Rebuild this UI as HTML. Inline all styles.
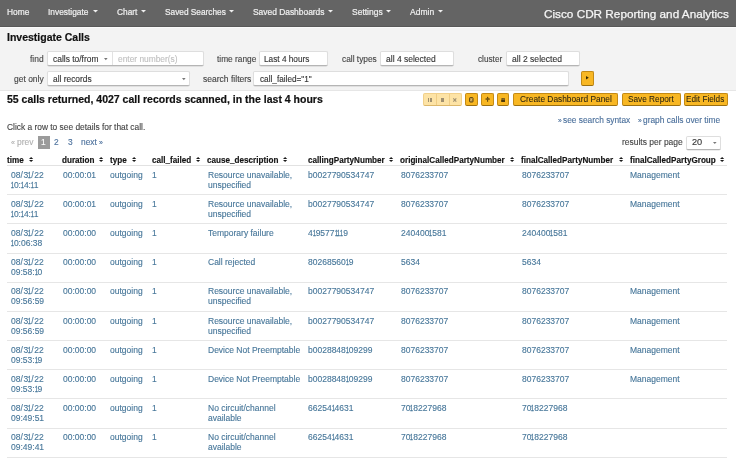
<!DOCTYPE html>
<html><head><meta charset="utf-8">
<style>
html,body{margin:0;padding:0;width:736px;height:463px;overflow:hidden;background:#fff;}
body{position:relative;font-family:"Liberation Sans",sans-serif;}
.t{position:absolute;white-space:nowrap;will-change:transform;-webkit-text-stroke:0.12px currentColor;}
.b{position:absolute;box-sizing:border-box;}
svg{position:absolute;overflow:visible;}
</style></head><body>
<div class="b" style="left:0px;top:0px;width:736.00px;height:26.50px;background:#646464;border-bottom:1px solid #585858;"></div>
<div class="b" style="left:0px;top:26.5px;width:736.00px;height:1.00px;background:#fafafa;"></div>
<div class="t" style="left:6.8px;top:7px;font-size:8.4px;line-height:10px;color:#f0f0f0;-webkit-text-stroke:0.2px #f0f0f0;">Home</div>
<div class="t" style="left:48.1px;top:7px;font-size:8.4px;line-height:10px;color:#f0f0f0;-webkit-text-stroke:0.2px #f0f0f0;">Investigate</div>
<svg style="left:92.89999999999999px;top:10.4px" width="6" height="3.4"><path d="M0 0 L5 0 L2.5 2.4 Z" fill="#f0f0f0"/></svg>
<div class="t" style="left:116.8px;top:7px;font-size:8.34px;line-height:10px;color:#f0f0f0;-webkit-text-stroke:0.2px #f0f0f0;">Chart</div>
<svg style="left:141.4px;top:10.4px" width="6" height="3.4"><path d="M0 0 L5 0 L2.5 2.4 Z" fill="#f0f0f0"/></svg>
<div class="t" style="left:164.6px;top:7px;font-size:8.3px;line-height:10px;color:#f0f0f0;-webkit-text-stroke:0.2px #f0f0f0;">Saved Searches</div>
<svg style="left:229.3px;top:10.4px" width="6" height="3.4"><path d="M0 0 L5 0 L2.5 2.4 Z" fill="#f0f0f0"/></svg>
<div class="t" style="left:253.1px;top:7px;font-size:8.42px;line-height:10px;color:#f0f0f0;-webkit-text-stroke:0.2px #f0f0f0;">Saved Dashboards</div>
<svg style="left:328.3px;top:10.4px" width="6" height="3.4"><path d="M0 0 L5 0 L2.5 2.4 Z" fill="#f0f0f0"/></svg>
<div class="t" style="left:351.9px;top:7px;font-size:8.5px;line-height:10px;color:#f0f0f0;-webkit-text-stroke:0.2px #f0f0f0;">Settings</div>
<svg style="left:386.3px;top:10.4px" width="6" height="3.4"><path d="M0 0 L5 0 L2.5 2.4 Z" fill="#f0f0f0"/></svg>
<div class="t" style="left:410.2px;top:7px;font-size:8.54px;line-height:10px;color:#f0f0f0;-webkit-text-stroke:0.2px #f0f0f0;">Admin</div>
<svg style="left:438.1px;top:10.4px" width="6" height="3.4"><path d="M0 0 L5 0 L2.5 2.4 Z" fill="#f0f0f0"/></svg>
<div class="t" style="left:543.6px;top:7px;font-size:11.75px;line-height:13px;color:#f6f6f6;-webkit-text-stroke:0.25px #f6f6f6;">Cisco CDR Reporting and Analytics</div>
<div class="b" style="left:0px;top:27.5px;width:736.00px;height:63.30px;background:#f3f3f3;border-bottom:1px solid #e6e6e6;"></div>
<div class="t" style="left:7px;top:31px;font-size:10.5px;line-height:12px;color:#111;font-weight:bold;-webkit-text-stroke:0.2px #111;">Investigate Calls</div>
<div class="t" style="right:692.70px;top:54px;font-size:8.44px;line-height:10px;color:#444;">find</div>
<div class="b" style="left:46.8px;top:51.3px;width:157.00px;height:14.70px;background:#fff;border:1px solid #dedede;border-bottom-color:#b5b5b5;border-radius:2px;box-shadow:0 0.5px 0.6px rgba(0,0,0,0.15);"></div>
<div class="b" style="left:112px;top:52px;width:0.80px;height:13.00px;background:#e2e2e2;"></div>
<div class="t" style="left:53px;top:54px;font-size:8.44px;line-height:10px;color:#333;">calls to/from</div>
<svg style="left:104.2px;top:58px" width="4.6" height="3.2"><path d="M0 0 L3.6 0 L1.8 2.2 Z" fill="#777"/></svg>
<div class="t" style="left:117.7px;top:54px;font-size:8.38px;line-height:10px;color:#c0c0c0;">enter number(s)</div>
<div class="t" style="right:480.00px;top:54px;font-size:8.32px;line-height:10px;color:#444;">time range</div>
<div class="b" style="left:259px;top:51.3px;width:68.90px;height:14.70px;background:#fff;border:1px solid #dedede;border-bottom-color:#b5b5b5;border-radius:2px;box-shadow:0 0.5px 0.6px rgba(0,0,0,0.15);"></div>
<div class="t" style="left:264.4px;top:55px;font-size:8.25px;line-height:9px;color:#333;">Last 4 hours</div>
<div class="t" style="right:359.00px;top:54px;font-size:8.35px;line-height:10px;color:#444;">call types</div>
<div class="b" style="left:380.3px;top:51.3px;width:73.50px;height:14.70px;background:#fff;border:1px solid #dedede;border-bottom-color:#b5b5b5;border-radius:2px;box-shadow:0 0.5px 0.6px rgba(0,0,0,0.15);"></div>
<div class="t" style="left:386px;top:54px;font-size:8.53px;line-height:10px;color:#333;">all 4 selected</div>
<div class="t" style="right:234.00px;top:55px;font-size:8.22px;line-height:9px;color:#444;">cluster</div>
<div class="b" style="left:506.2px;top:51.3px;width:73.40px;height:14.70px;background:#fff;border:1px solid #dedede;border-bottom-color:#b5b5b5;border-radius:2px;box-shadow:0 0.5px 0.6px rgba(0,0,0,0.15);"></div>
<div class="t" style="left:511.5px;top:54px;font-size:8.57px;line-height:10px;color:#333;">all 2 selected</div>
<div class="t" style="right:692.70px;top:74px;font-size:8.48px;line-height:10px;color:#444;">get only</div>
<div class="b" style="left:46.8px;top:71.4px;width:143.00px;height:14.60px;background:#fff;border:1px solid #dedede;border-bottom-color:#b5b5b5;border-radius:2px;box-shadow:0 0.5px 0.6px rgba(0,0,0,0.15);"></div>
<div class="t" style="left:53px;top:74px;font-size:8.39px;line-height:10px;color:#333;">all records</div>
<svg style="left:181.9px;top:78px" width="4.6" height="3.2"><path d="M0 0 L3.6 0 L1.8 2.2 Z" fill="#777"/></svg>
<div class="t" style="right:484.70px;top:74px;font-size:8.54px;line-height:10px;color:#444;">search filters</div>
<div class="b" style="left:253.1px;top:71.4px;width:315.50px;height:14.60px;background:#fff;border:1px solid #dedede;border-bottom-color:#b5b5b5;border-radius:2px;box-shadow:0 0.5px 0.6px rgba(0,0,0,0.15);"></div>
<div class="t" style="left:260.2px;top:75px;font-size:8.23px;line-height:9px;color:#333;">call_failed="1"</div>
<div class="b" style="left:580.9px;top:71.4px;width:13.20px;height:14.20px;background:#f8b723;border:1px solid #c48a14;border-bottom-color:#9c7010;border-radius:2px;"></div>
<svg style="left:586px;top:75.8px" width="4" height="4"><path d="M0 0 L2.8 1.8 L0 3.6 Z" fill="#3a2a00"/></svg>
<div class="t" style="left:7.1px;top:93px;font-size:10.5px;line-height:12px;color:#111;font-weight:bold;-webkit-text-stroke:0.2px #111;">55 calls returned, 4027 call records scanned, in the last 4 hours</div>
<div class="b" style="left:423.2px;top:93.4px;width:38.40px;height:12.50px;background:#fde3a5;border:1px solid #f1d08a;border-bottom-color:#dcb76a;border-radius:2px;"></div>
<div class="b" style="left:435.9px;top:93.9px;width:0.70px;height:11.50px;background:#efcd85;"></div>
<div class="b" style="left:448.5px;top:93.9px;width:0.70px;height:11.50px;background:#efcd85;"></div>
<div class="b" style="left:428.1px;top:97.8px;width:1.30px;height:4.20px;background:#a09070;"></div>
<div class="b" style="left:430.4px;top:97.8px;width:1.30px;height:4.20px;background:#a09070;"></div>
<div class="b" style="left:440.9px;top:98.4px;width:3.00px;height:3.30px;background:#a09070;"></div>
<svg style="left:453.2px;top:97.8px" width="4" height="4"><path d="M0.3 0.3 L3.3 3.6 M3.3 0.3 L0.3 3.6" stroke="#a09070" stroke-width="1.1"/></svg>
<div class="b" style="left:465.3px;top:93.4px;width:12.50px;height:12.50px;background:#f8b723;border:1px solid #c48a14;border-bottom-color:#9c7010;border-radius:2px;"></div>
<div class="b" style="left:481.1px;top:93.4px;width:12.50px;height:12.50px;background:#f8b723;border:1px solid #c48a14;border-bottom-color:#9c7010;border-radius:2px;"></div>
<div class="b" style="left:497.1px;top:93.4px;width:12.40px;height:12.50px;background:#f8b723;border:1px solid #c48a14;border-bottom-color:#9c7010;border-radius:2px;"></div>
<svg style="left:469px;top:97px" width="6" height="7"><rect x="0.6" y="0.6" width="3.4" height="4.4" rx="0.6" fill="#c9a04a" stroke="#4a3608" stroke-width="0.9"/><path d="M1.5 3.8 L3.2 1.6" stroke="#e8c070" stroke-width="0.7"/></svg>
<svg style="left:485px;top:96px" width="6" height="7"><path d="M1.5 2.6 L2.65 0.6 L3.8 2.6 Z" fill="#4a3608"/><rect x="0.5" y="2.5" width="4.3" height="1.1" fill="#4a3608"/><rect x="2.2" y="3.5" width="0.9" height="2.3" fill="#4a3608"/></svg>
<svg style="left:501px;top:98px" width="6" height="5"><rect x="0.9" y="0.4" width="2.4" height="1.6" fill="#c9a04a" stroke="#4a3608" stroke-width="0.6"/><rect x="0.2" y="1.8" width="3.8" height="2.1" rx="0.5" fill="#4a3608"/></svg>
<div class="b" style="left:513.2px;top:93.4px;width:104.50px;height:12.50px;background:#f8b723;border:1px solid #c48a14;border-bottom-color:#9c7010;border-radius:2px;"></div>
<div class="t" style="left:519.5px;top:94px;font-size:8.35px;line-height:10px;color:#2a2310;-webkit-text-stroke:0.05px #2a2310;">Create Dashboard Panel</div>
<div class="b" style="left:621.5px;top:93.4px;width:59.10px;height:12.50px;background:#f8b723;border:1px solid #c48a14;border-bottom-color:#9c7010;border-radius:2px;"></div>
<div class="t" style="left:628px;top:95px;font-size:8.25px;line-height:9px;color:#2a2310;-webkit-text-stroke:0.05px #2a2310;">Save Report</div>
<div class="b" style="left:684px;top:93.4px;width:43.50px;height:12.50px;background:#f8b723;border:1px solid #c48a14;border-bottom-color:#9c7010;border-radius:2px;"></div>
<div class="t" style="left:686.4px;top:95px;font-size:8.2px;line-height:9px;color:#2a2310;-webkit-text-stroke:0.05px #2a2310;">Edit Fields</div>
<div class="t" style="left:558.2px;top:117px;font-size:6.8px;line-height:7px;color:#4a6f9b;">»</div>
<div class="t" style="left:563.4px;top:115px;font-size:8.35px;line-height:10px;color:#4a6f9b;">see search syntax</div>
<div class="t" style="left:637.5px;top:117px;font-size:6.8px;line-height:7px;color:#4a6f9b;">»</div>
<div class="t" style="left:643.3px;top:115px;font-size:8.37px;line-height:10px;color:#4a6f9b;">graph calls over time</div>
<div class="t" style="left:7.1px;top:122px;font-size:8.4px;line-height:10px;color:#444;">Click a row to see details for that call.</div>
<div class="t" style="left:11px;top:139px;font-size:7px;line-height:7px;color:#b0b0b0;">«</div>
<div class="t" style="left:17px;top:137px;font-size:8.48px;line-height:10px;color:#b0b0b0;">prev</div>
<div class="b" style="left:37.7px;top:136px;width:11.90px;height:12.70px;background:#9b9b9b;"></div>
<div class="t" style="left:41.3px;top:137px;font-size:8.4px;line-height:10px;color:#fff;">1</div>
<div class="t" style="left:54px;top:137px;font-size:8.4px;line-height:10px;color:#4a6f9b;">2</div>
<div class="t" style="left:67.6px;top:137px;font-size:8.4px;line-height:10px;color:#4a6f9b;">3</div>
<div class="t" style="left:81px;top:137px;font-size:8.4px;line-height:10px;color:#4a6f9b;">next</div>
<div class="t" style="left:99.2px;top:139px;font-size:7px;line-height:7px;color:#4a6f9b;">»</div>
<div class="t" style="right:53.30px;top:137px;font-size:8.47px;line-height:10px;color:#444;">results per page</div>
<div class="b" style="left:685.5px;top:135.8px;width:35.20px;height:13.80px;background:#fff;border:1px solid #dedede;border-bottom-color:#b5b5b5;border-radius:2px;box-shadow:0 0.5px 0.6px rgba(0,0,0,0.15);"></div>
<div class="t" style="left:691.7px;top:137px;font-size:9.2px;line-height:10px;color:#333;">20</div>
<svg style="left:713px;top:141.6px" width="4.6" height="3"><path d="M0 0 L3.6 0 L1.8 2 Z" fill="#777"/></svg>
<div class="t" style="left:7.1px;top:156px;font-size:8.13px;line-height:9px;color:#151515;font-weight:bold;-webkit-text-stroke:0.15px #111;">time</div>
<svg style="left:28.9px;top:157.2px" width="5" height="6"><path d="M0 1.9 L2.1 0 L4.2 1.9 Z M0 2.9 L2.1 4.9 L4.2 2.9 Z" fill="#1a1a1a"/></svg>
<div class="t" style="left:62px;top:156px;font-size:8.13px;line-height:9px;color:#151515;font-weight:bold;-webkit-text-stroke:0.15px #111;">duration</div>
<svg style="left:99.1px;top:157.2px" width="5" height="6"><path d="M0 1.9 L2.1 0 L4.2 1.9 Z M0 2.9 L2.1 4.9 L4.2 2.9 Z" fill="#1a1a1a"/></svg>
<div class="t" style="left:110.4px;top:156px;font-size:8.13px;line-height:9px;color:#151515;font-weight:bold;-webkit-text-stroke:0.15px #111;">type</div>
<svg style="left:132.3px;top:157.2px" width="5" height="6"><path d="M0 1.9 L2.1 0 L4.2 1.9 Z M0 2.9 L2.1 4.9 L4.2 2.9 Z" fill="#1a1a1a"/></svg>
<div class="t" style="left:151.7px;top:156px;font-size:8.13px;line-height:9px;color:#151515;font-weight:bold;-webkit-text-stroke:0.15px #111;">call_failed</div>
<svg style="left:196.0px;top:157.2px" width="5" height="6"><path d="M0 1.9 L2.1 0 L4.2 1.9 Z M0 2.9 L2.1 4.9 L4.2 2.9 Z" fill="#1a1a1a"/></svg>
<div class="t" style="left:206.9px;top:156px;font-size:8.13px;line-height:9px;color:#151515;font-weight:bold;-webkit-text-stroke:0.15px #111;">cause_description</div>
<svg style="left:282.7px;top:157.2px" width="5" height="6"><path d="M0 1.9 L2.1 0 L4.2 1.9 Z M0 2.9 L2.1 4.9 L4.2 2.9 Z" fill="#1a1a1a"/></svg>
<div class="t" style="left:307.7px;top:156px;font-size:8.13px;line-height:9px;color:#151515;font-weight:bold;-webkit-text-stroke:0.15px #111;">callingPartyNumber</div>
<svg style="left:389.1px;top:157.2px" width="5" height="6"><path d="M0 1.9 L2.1 0 L4.2 1.9 Z M0 2.9 L2.1 4.9 L4.2 2.9 Z" fill="#1a1a1a"/></svg>
<div class="t" style="left:400.1px;top:156px;font-size:8.14px;line-height:9px;color:#151515;font-weight:bold;-webkit-text-stroke:0.15px #111;">originalCalledPartyNumber</div>
<svg style="left:509.7px;top:157.2px" width="5" height="6"><path d="M0 1.9 L2.1 0 L4.2 1.9 Z M0 2.9 L2.1 4.9 L4.2 2.9 Z" fill="#1a1a1a"/></svg>
<div class="t" style="left:521.2px;top:156px;font-size:8.13px;line-height:9px;color:#151515;font-weight:bold;-webkit-text-stroke:0.15px #111;">finalCalledPartyNumber</div>
<svg style="left:618.7px;top:157.2px" width="5" height="6"><path d="M0 1.9 L2.1 0 L4.2 1.9 Z M0 2.9 L2.1 4.9 L4.2 2.9 Z" fill="#1a1a1a"/></svg>
<div class="t" style="left:629.7px;top:156px;font-size:8.13px;line-height:9px;color:#151515;font-weight:bold;-webkit-text-stroke:0.15px #111;">finalCalledPartyGroup</div>
<svg style="left:719.9px;top:157.2px" width="5" height="6"><path d="M0 1.9 L2.1 0 L4.2 1.9 Z M0 2.9 L2.1 4.9 L4.2 2.9 Z" fill="#1a1a1a"/></svg>
<div class="b" style="left:6.5px;top:165px;width:720.80px;height:1.00px;background:#e2e2e2;"></div>
<div class="t" style="left:10.6px;top:170px;font-size:8.5px;line-height:10px;color:#467699;">08<span style="letter-spacing:0.7px">/</span>3<span style="display:inline-block;width:2.9px;transform:scaleX(0.6);transform-origin:0 0;-webkit-text-stroke:0.35px currentColor">1</span><span style="letter-spacing:0.7px">/</span>22</div>
<div class="t" style="left:10.6px;top:180px;font-size:8.5px;line-height:10px;color:#467699;"><span style="display:inline-block;width:2.9px;transform:scaleX(0.6);transform-origin:0 0;-webkit-text-stroke:0.35px currentColor">1</span>0:<span style="display:inline-block;width:2.9px;transform:scaleX(0.6);transform-origin:0 0;-webkit-text-stroke:0.35px currentColor">1</span>4:<span style="display:inline-block;width:2.9px;transform:scaleX(0.6);transform-origin:0 0;-webkit-text-stroke:0.35px currentColor">1</span>1</div>
<div class="t" style="left:62.8px;top:170px;font-size:8.5px;line-height:10px;color:#467699;">00:00:01</div>
<div class="t" style="left:110.4px;top:170px;font-size:8.5px;line-height:10px;color:#467699;">outgoing</div>
<div class="t" style="left:152.3px;top:170px;font-size:8.5px;line-height:10px;color:#467699;">1</div>
<div class="t" style="left:207.5px;top:170px;font-size:8.5px;line-height:10px;color:#467699;">Resource unavailable,</div>
<div class="t" style="left:207.5px;top:180px;font-size:8.5px;line-height:10px;color:#467699;">unspecified</div>
<div class="t" style="left:308.0px;top:170px;font-size:8.5px;line-height:10px;color:#467699;">b0027790534747</div>
<div class="t" style="left:400.6px;top:170px;font-size:8.5px;line-height:10px;color:#467699;">8076233707</div>
<div class="t" style="left:521.5px;top:170px;font-size:8.5px;line-height:10px;color:#467699;">8076233707</div>
<div class="t" style="left:630px;top:170px;font-size:8.5px;line-height:10px;color:#467699;">Management</div>
<div class="b" style="left:6.5px;top:194px;width:720.80px;height:1.00px;background:#e6e6e6;"></div>
<div class="t" style="left:10.6px;top:199px;font-size:8.5px;line-height:10px;color:#467699;">08<span style="letter-spacing:0.7px">/</span>3<span style="display:inline-block;width:2.9px;transform:scaleX(0.6);transform-origin:0 0;-webkit-text-stroke:0.35px currentColor">1</span><span style="letter-spacing:0.7px">/</span>22</div>
<div class="t" style="left:10.6px;top:209px;font-size:8.5px;line-height:10px;color:#467699;"><span style="display:inline-block;width:2.9px;transform:scaleX(0.6);transform-origin:0 0;-webkit-text-stroke:0.35px currentColor">1</span>0:<span style="display:inline-block;width:2.9px;transform:scaleX(0.6);transform-origin:0 0;-webkit-text-stroke:0.35px currentColor">1</span>4:<span style="display:inline-block;width:2.9px;transform:scaleX(0.6);transform-origin:0 0;-webkit-text-stroke:0.35px currentColor">1</span>1</div>
<div class="t" style="left:62.8px;top:199px;font-size:8.5px;line-height:10px;color:#467699;">00:00:01</div>
<div class="t" style="left:110.4px;top:199px;font-size:8.5px;line-height:10px;color:#467699;">outgoing</div>
<div class="t" style="left:152.3px;top:199px;font-size:8.5px;line-height:10px;color:#467699;">1</div>
<div class="t" style="left:207.5px;top:199px;font-size:8.5px;line-height:10px;color:#467699;">Resource unavailable,</div>
<div class="t" style="left:207.5px;top:209px;font-size:8.5px;line-height:10px;color:#467699;">unspecified</div>
<div class="t" style="left:308.0px;top:199px;font-size:8.5px;line-height:10px;color:#467699;">b0027790534747</div>
<div class="t" style="left:400.6px;top:199px;font-size:8.5px;line-height:10px;color:#467699;">8076233707</div>
<div class="t" style="left:521.5px;top:199px;font-size:8.5px;line-height:10px;color:#467699;">8076233707</div>
<div class="t" style="left:630px;top:199px;font-size:8.5px;line-height:10px;color:#467699;">Management</div>
<div class="b" style="left:6.5px;top:223px;width:720.80px;height:1.00px;background:#e6e6e6;"></div>
<div class="t" style="left:10.6px;top:228px;font-size:8.5px;line-height:10px;color:#467699;">08<span style="letter-spacing:0.7px">/</span>3<span style="display:inline-block;width:2.9px;transform:scaleX(0.6);transform-origin:0 0;-webkit-text-stroke:0.35px currentColor">1</span><span style="letter-spacing:0.7px">/</span>22</div>
<div class="t" style="left:10.6px;top:238px;font-size:8.5px;line-height:10px;color:#467699;"><span style="display:inline-block;width:2.9px;transform:scaleX(0.6);transform-origin:0 0;-webkit-text-stroke:0.35px currentColor">1</span>0:06:38</div>
<div class="t" style="left:62.8px;top:228px;font-size:8.5px;line-height:10px;color:#467699;">00:00:00</div>
<div class="t" style="left:110.4px;top:228px;font-size:8.5px;line-height:10px;color:#467699;">outgoing</div>
<div class="t" style="left:152.3px;top:228px;font-size:8.5px;line-height:10px;color:#467699;">1</div>
<div class="t" style="left:207.5px;top:228px;font-size:8.5px;line-height:10px;color:#467699;">Temporary failure</div>
<div class="t" style="left:308.0px;top:228px;font-size:8.5px;line-height:10px;color:#467699;">4<span style="display:inline-block;width:2.9px;transform:scaleX(0.6);transform-origin:0 0;-webkit-text-stroke:0.35px currentColor">1</span>9577<span style="display:inline-block;width:2.9px;transform:scaleX(0.6);transform-origin:0 0;-webkit-text-stroke:0.35px currentColor">1</span><span style="display:inline-block;width:2.9px;transform:scaleX(0.6);transform-origin:0 0;-webkit-text-stroke:0.35px currentColor">1</span><span style="display:inline-block;width:2.9px;transform:scaleX(0.6);transform-origin:0 0;-webkit-text-stroke:0.35px currentColor">1</span>9</div>
<div class="t" style="left:400.6px;top:228px;font-size:8.5px;line-height:10px;color:#467699;">240400<span style="display:inline-block;width:2.9px;transform:scaleX(0.6);transform-origin:0 0;-webkit-text-stroke:0.35px currentColor">1</span>581</div>
<div class="t" style="left:521.5px;top:228px;font-size:8.5px;line-height:10px;color:#467699;">240400<span style="display:inline-block;width:2.9px;transform:scaleX(0.6);transform-origin:0 0;-webkit-text-stroke:0.35px currentColor">1</span>581</div>
<div class="b" style="left:6.5px;top:253px;width:720.80px;height:1.00px;background:#e6e6e6;"></div>
<div class="t" style="left:10.6px;top:257px;font-size:8.5px;line-height:10px;color:#467699;">08<span style="letter-spacing:0.7px">/</span>3<span style="display:inline-block;width:2.9px;transform:scaleX(0.6);transform-origin:0 0;-webkit-text-stroke:0.35px currentColor">1</span><span style="letter-spacing:0.7px">/</span>22</div>
<div class="t" style="left:10.6px;top:267px;font-size:8.5px;line-height:10px;color:#467699;">09:58:<span style="display:inline-block;width:2.9px;transform:scaleX(0.6);transform-origin:0 0;-webkit-text-stroke:0.35px currentColor">1</span>0</div>
<div class="t" style="left:62.8px;top:257px;font-size:8.5px;line-height:10px;color:#467699;">00:00:00</div>
<div class="t" style="left:110.4px;top:257px;font-size:8.5px;line-height:10px;color:#467699;">outgoing</div>
<div class="t" style="left:152.3px;top:257px;font-size:8.5px;line-height:10px;color:#467699;">1</div>
<div class="t" style="left:207.5px;top:257px;font-size:8.5px;line-height:10px;color:#467699;">Call rejected</div>
<div class="t" style="left:308.0px;top:257px;font-size:8.5px;line-height:10px;color:#467699;">80268560<span style="display:inline-block;width:2.9px;transform:scaleX(0.6);transform-origin:0 0;-webkit-text-stroke:0.35px currentColor">1</span>9</div>
<div class="t" style="left:400.6px;top:257px;font-size:8.5px;line-height:10px;color:#467699;">5634</div>
<div class="t" style="left:521.5px;top:257px;font-size:8.5px;line-height:10px;color:#467699;">5634</div>
<div class="b" style="left:6.5px;top:282px;width:720.80px;height:1.00px;background:#e6e6e6;"></div>
<div class="t" style="left:10.6px;top:286px;font-size:8.5px;line-height:10px;color:#467699;">08<span style="letter-spacing:0.7px">/</span>3<span style="display:inline-block;width:2.9px;transform:scaleX(0.6);transform-origin:0 0;-webkit-text-stroke:0.35px currentColor">1</span><span style="letter-spacing:0.7px">/</span>22</div>
<div class="t" style="left:10.6px;top:296px;font-size:8.5px;line-height:10px;color:#467699;">09:56:59</div>
<div class="t" style="left:62.8px;top:286px;font-size:8.5px;line-height:10px;color:#467699;">00:00:00</div>
<div class="t" style="left:110.4px;top:286px;font-size:8.5px;line-height:10px;color:#467699;">outgoing</div>
<div class="t" style="left:152.3px;top:286px;font-size:8.5px;line-height:10px;color:#467699;">1</div>
<div class="t" style="left:207.5px;top:286px;font-size:8.5px;line-height:10px;color:#467699;">Resource unavailable,</div>
<div class="t" style="left:207.5px;top:296px;font-size:8.5px;line-height:10px;color:#467699;">unspecified</div>
<div class="t" style="left:308.0px;top:286px;font-size:8.5px;line-height:10px;color:#467699;">b0027790534747</div>
<div class="t" style="left:400.6px;top:286px;font-size:8.5px;line-height:10px;color:#467699;">8076233707</div>
<div class="t" style="left:521.5px;top:286px;font-size:8.5px;line-height:10px;color:#467699;">8076233707</div>
<div class="t" style="left:630px;top:286px;font-size:8.5px;line-height:10px;color:#467699;">Management</div>
<div class="b" style="left:6.5px;top:311px;width:720.80px;height:1.00px;background:#e6e6e6;"></div>
<div class="t" style="left:10.6px;top:316px;font-size:8.5px;line-height:10px;color:#467699;">08<span style="letter-spacing:0.7px">/</span>3<span style="display:inline-block;width:2.9px;transform:scaleX(0.6);transform-origin:0 0;-webkit-text-stroke:0.35px currentColor">1</span><span style="letter-spacing:0.7px">/</span>22</div>
<div class="t" style="left:10.6px;top:326px;font-size:8.5px;line-height:10px;color:#467699;">09:56:59</div>
<div class="t" style="left:62.8px;top:316px;font-size:8.5px;line-height:10px;color:#467699;">00:00:00</div>
<div class="t" style="left:110.4px;top:316px;font-size:8.5px;line-height:10px;color:#467699;">outgoing</div>
<div class="t" style="left:152.3px;top:316px;font-size:8.5px;line-height:10px;color:#467699;">1</div>
<div class="t" style="left:207.5px;top:316px;font-size:8.5px;line-height:10px;color:#467699;">Resource unavailable,</div>
<div class="t" style="left:207.5px;top:326px;font-size:8.5px;line-height:10px;color:#467699;">unspecified</div>
<div class="t" style="left:308.0px;top:316px;font-size:8.5px;line-height:10px;color:#467699;">b0027790534747</div>
<div class="t" style="left:400.6px;top:316px;font-size:8.5px;line-height:10px;color:#467699;">8076233707</div>
<div class="t" style="left:521.5px;top:316px;font-size:8.5px;line-height:10px;color:#467699;">8076233707</div>
<div class="t" style="left:630px;top:316px;font-size:8.5px;line-height:10px;color:#467699;">Management</div>
<div class="b" style="left:6.5px;top:340px;width:720.80px;height:1.00px;background:#e6e6e6;"></div>
<div class="t" style="left:10.6px;top:345px;font-size:8.5px;line-height:10px;color:#467699;">08<span style="letter-spacing:0.7px">/</span>3<span style="display:inline-block;width:2.9px;transform:scaleX(0.6);transform-origin:0 0;-webkit-text-stroke:0.35px currentColor">1</span><span style="letter-spacing:0.7px">/</span>22</div>
<div class="t" style="left:10.6px;top:355px;font-size:8.5px;line-height:10px;color:#467699;">09:53:<span style="display:inline-block;width:2.9px;transform:scaleX(0.6);transform-origin:0 0;-webkit-text-stroke:0.35px currentColor">1</span>9</div>
<div class="t" style="left:62.8px;top:345px;font-size:8.5px;line-height:10px;color:#467699;">00:00:00</div>
<div class="t" style="left:110.4px;top:345px;font-size:8.5px;line-height:10px;color:#467699;">outgoing</div>
<div class="t" style="left:152.3px;top:345px;font-size:8.5px;line-height:10px;color:#467699;">1</div>
<div class="t" style="left:207.5px;top:345px;font-size:8.5px;line-height:10px;color:#467699;">Device Not Preemptable</div>
<div class="t" style="left:308.0px;top:345px;font-size:8.5px;line-height:10px;color:#467699;">b0028848<span style="display:inline-block;width:2.9px;transform:scaleX(0.6);transform-origin:0 0;-webkit-text-stroke:0.35px currentColor">1</span>09299</div>
<div class="t" style="left:400.6px;top:345px;font-size:8.5px;line-height:10px;color:#467699;">8076233707</div>
<div class="t" style="left:521.5px;top:345px;font-size:8.5px;line-height:10px;color:#467699;">8076233707</div>
<div class="t" style="left:630px;top:345px;font-size:8.5px;line-height:10px;color:#467699;">Management</div>
<div class="b" style="left:6.5px;top:369px;width:720.80px;height:1.00px;background:#e6e6e6;"></div>
<div class="t" style="left:10.6px;top:374px;font-size:8.5px;line-height:10px;color:#467699;">08<span style="letter-spacing:0.7px">/</span>3<span style="display:inline-block;width:2.9px;transform:scaleX(0.6);transform-origin:0 0;-webkit-text-stroke:0.35px currentColor">1</span><span style="letter-spacing:0.7px">/</span>22</div>
<div class="t" style="left:10.6px;top:384px;font-size:8.5px;line-height:10px;color:#467699;">09:53:<span style="display:inline-block;width:2.9px;transform:scaleX(0.6);transform-origin:0 0;-webkit-text-stroke:0.35px currentColor">1</span>9</div>
<div class="t" style="left:62.8px;top:374px;font-size:8.5px;line-height:10px;color:#467699;">00:00:00</div>
<div class="t" style="left:110.4px;top:374px;font-size:8.5px;line-height:10px;color:#467699;">outgoing</div>
<div class="t" style="left:152.3px;top:374px;font-size:8.5px;line-height:10px;color:#467699;">1</div>
<div class="t" style="left:207.5px;top:374px;font-size:8.5px;line-height:10px;color:#467699;">Device Not Preemptable</div>
<div class="t" style="left:308.0px;top:374px;font-size:8.5px;line-height:10px;color:#467699;">b0028848<span style="display:inline-block;width:2.9px;transform:scaleX(0.6);transform-origin:0 0;-webkit-text-stroke:0.35px currentColor">1</span>09299</div>
<div class="t" style="left:400.6px;top:374px;font-size:8.5px;line-height:10px;color:#467699;">8076233707</div>
<div class="t" style="left:521.5px;top:374px;font-size:8.5px;line-height:10px;color:#467699;">8076233707</div>
<div class="t" style="left:630px;top:374px;font-size:8.5px;line-height:10px;color:#467699;">Management</div>
<div class="b" style="left:6.5px;top:398px;width:720.80px;height:1.00px;background:#e6e6e6;"></div>
<div class="t" style="left:10.6px;top:403px;font-size:8.5px;line-height:10px;color:#467699;">08<span style="letter-spacing:0.7px">/</span>3<span style="display:inline-block;width:2.9px;transform:scaleX(0.6);transform-origin:0 0;-webkit-text-stroke:0.35px currentColor">1</span><span style="letter-spacing:0.7px">/</span>22</div>
<div class="t" style="left:10.6px;top:413px;font-size:8.5px;line-height:10px;color:#467699;">09:49:51</div>
<div class="t" style="left:62.8px;top:403px;font-size:8.5px;line-height:10px;color:#467699;">00:00:00</div>
<div class="t" style="left:110.4px;top:403px;font-size:8.5px;line-height:10px;color:#467699;">outgoing</div>
<div class="t" style="left:152.3px;top:403px;font-size:8.5px;line-height:10px;color:#467699;">1</div>
<div class="t" style="left:207.5px;top:403px;font-size:8.5px;line-height:10px;color:#467699;">No circuit/channel</div>
<div class="t" style="left:207.5px;top:413px;font-size:8.5px;line-height:10px;color:#467699;">available</div>
<div class="t" style="left:308.0px;top:403px;font-size:8.5px;line-height:10px;color:#467699;">66254<span style="display:inline-block;width:2.9px;transform:scaleX(0.6);transform-origin:0 0;-webkit-text-stroke:0.35px currentColor">1</span>4631</div>
<div class="t" style="left:400.6px;top:403px;font-size:8.5px;line-height:10px;color:#467699;">70<span style="display:inline-block;width:2.9px;transform:scaleX(0.6);transform-origin:0 0;-webkit-text-stroke:0.35px currentColor">1</span>8227968</div>
<div class="t" style="left:521.5px;top:403px;font-size:8.5px;line-height:10px;color:#467699;">70<span style="display:inline-block;width:2.9px;transform:scaleX(0.6);transform-origin:0 0;-webkit-text-stroke:0.35px currentColor">1</span>8227968</div>
<div class="b" style="left:6.5px;top:428px;width:720.80px;height:1.00px;background:#e6e6e6;"></div>
<div class="t" style="left:10.6px;top:432px;font-size:8.5px;line-height:10px;color:#467699;">08<span style="letter-spacing:0.7px">/</span>3<span style="display:inline-block;width:2.9px;transform:scaleX(0.6);transform-origin:0 0;-webkit-text-stroke:0.35px currentColor">1</span><span style="letter-spacing:0.7px">/</span>22</div>
<div class="t" style="left:10.6px;top:442px;font-size:8.5px;line-height:10px;color:#467699;">09:49:41</div>
<div class="t" style="left:62.8px;top:432px;font-size:8.5px;line-height:10px;color:#467699;">00:00:00</div>
<div class="t" style="left:110.4px;top:432px;font-size:8.5px;line-height:10px;color:#467699;">outgoing</div>
<div class="t" style="left:152.3px;top:432px;font-size:8.5px;line-height:10px;color:#467699;">1</div>
<div class="t" style="left:207.5px;top:432px;font-size:8.5px;line-height:10px;color:#467699;">No circuit/channel</div>
<div class="t" style="left:207.5px;top:442px;font-size:8.5px;line-height:10px;color:#467699;">available</div>
<div class="t" style="left:308.0px;top:432px;font-size:8.5px;line-height:10px;color:#467699;">66254<span style="display:inline-block;width:2.9px;transform:scaleX(0.6);transform-origin:0 0;-webkit-text-stroke:0.35px currentColor">1</span>4631</div>
<div class="t" style="left:400.6px;top:432px;font-size:8.5px;line-height:10px;color:#467699;">70<span style="display:inline-block;width:2.9px;transform:scaleX(0.6);transform-origin:0 0;-webkit-text-stroke:0.35px currentColor">1</span>8227968</div>
<div class="t" style="left:521.5px;top:432px;font-size:8.5px;line-height:10px;color:#467699;">70<span style="display:inline-block;width:2.9px;transform:scaleX(0.6);transform-origin:0 0;-webkit-text-stroke:0.35px currentColor">1</span>8227968</div>
<div class="b" style="left:6.5px;top:457px;width:720.80px;height:1.00px;background:#e6e6e6;"></div>
</body></html>
